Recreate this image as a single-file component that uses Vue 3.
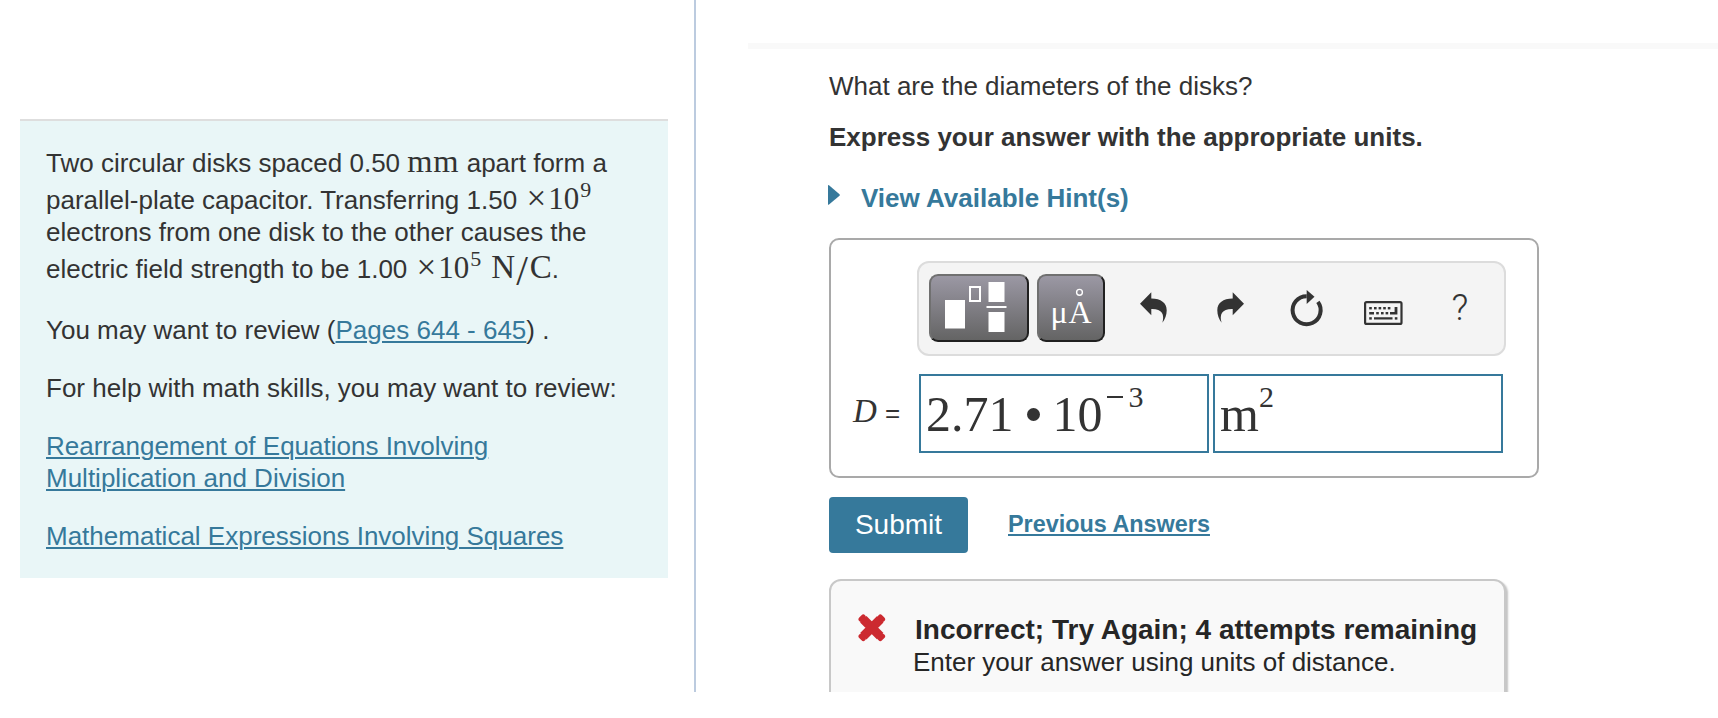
<script setup>
const keyDots = [
  [26.2, 33], [31, 33], [35.6, 33], [40.2, 33], [44.8, 33],
  [33.2, 38], [38, 38], [42.6, 38],
  [26.2, 43.2], [51.8, 43.2],
]
</script>

<template>
  <div class="page">
    <aside class="left">
      <div class="intro">
        <div class="problem">
          <div class="line tall">Two circular disks spaced 0.50 <span class="m mm">mm</span> apart form a</div>
          <div class="line">parallel-plate capacitor. Transferring 1.50 <span class="m times">×</span><span class="m ten">10</span><span class="m exp">9</span></div>
          <div class="line tall">electrons from one disk to the other causes the</div>
          <div class="line last">electric field strength to be 1.00 <span class="m times">×</span><span class="m ten">10</span><span class="m exp">5</span><span class="m unit">N<span class="slash">/</span>C</span>.</div>
        </div>
        <p>You may want to review (<a>Pages 644 - 645</a>) .</p>
        <p>For help with math skills, you may want to review:</p>
        <p><a>Rearrangement of Equations Involving<br>Multiplication and Division</a></p>
        <p><a>Mathematical Expressions Involving Squares</a></p>
      </div>
    </aside>

    <main class="right">
      <div class="rule"></div>
      <div class="content">
        <div class="question">What are the diameters of the disks?</div>
        <div class="express">Express your answer with the appropriate units.</div>
        <div class="hint">
          <svg width="13" height="22" viewBox="0 0 13 22"><path d="M0 1.500Q0 .500 1 1.200L11.500 10.200Q12.300 11 11.500 11.800L1 20.600Q0 21.300 0 20Z" fill="#36799b" /></svg>
          <span>View Available Hint(s)</span>
        </div>

        <section class="answer">
          <div class="toolbar">
            <div class="tbtn wide">
              <svg width="96" height="64" viewBox="0 0 96 64">
                <rect x="14" y="24" width="20" height="28.500" fill="#fff" />
                <rect x="39" y="11" width="10" height="14" fill="none" stroke="#fff" stroke-width="2" />
                <rect x="57.500" y="6" width="16" height="20" fill="#fff" />
                <rect x="55.500" y="30" width="20" height="2" fill="#fff" />
                <rect x="57.500" y="36" width="16" height="20" fill="#fff" />
              </svg>
            </div>
            <div class="tbtn units">
              <svg width="64" height="64" viewBox="0 0 64 64">
                <text x="11.500" y="46.800" class="mu">μ</text>
                <text x="29.500" y="46.800" class="mu">A</text>
                <circle cx="40.500" cy="16.300" r="2.900" fill="none" stroke="#fff" stroke-width="1.400" />
              </svg>
            </div>
            <div class="icons">
              <svg width="76" height="68" viewBox="0 0 76 68"><path d="M25 29.700 36.300 18.300V24.600C46 24.700 51.700 29 51.700 36.200 51.700 41 50 45 47.400 48.700 49.800 40.500 47 34.700 36.300 35V41.300Z" fill="#333" /></svg>
              <svg width="76" height="68" viewBox="0 0 76 68"><path d="M53 29.700 41.700 18.300V24.600C32 24.700 26.300 29 26.300 36.200 26.300 41 28 45 30.600 48.700 28.200 40.500 31 34.700 41.700 35V41.300Z" fill="#333" /></svg>
              <svg width="76" height="68" viewBox="0 0 76 68">
                <path d="M50.900 27.900A14 14 0 1 1 39.700 22.200" fill="none" stroke="#333" stroke-width="4" />
                <path d="M39.700 16 47.500 22.700 39.700 30Z" fill="#333" />
              </svg>
              <svg width="76" height="68" viewBox="0 0 76 68">
                <rect x="22.100" y="28.100" width="36.400" height="21.800" rx="1.500" fill="none" stroke="#333" stroke-width="2.200" />
                <rect v-for="(d, i) in keyDots" :key="i" :x="d[0]" :y="d[1]" width="2.600" height="2.400" fill="#333" />
                <path d="M26.200 38H31V40.400H26.200ZM31 43.200H49.500V45.600H31ZM51.600 33H54.400V40.400H47V38H51.600Z" fill="#333" />
              </svg>
              <svg width="76" height="68" viewBox="0 0 76 68"><text x="41" y="46.300" class="help">?</text></svg>
            </div>
          </div>
          <div class="entry">
            <div class="label"><i>D</i><span>=</span></div>
            <div class="field">
              <span class="num">2.71</span><span class="dot"></span><span class="num">10</span><span class="minus"></span><span class="sup">3</span>
            </div>
            <div class="field second"><span class="num">m</span><span class="sup">2</span></div>
          </div>
        </section>

        <div class="actions">
          <button>Submit</button>
          <a class="prev">Previous Answers</a>
        </div>

        <section class="feedback">
          <svg width="28" height="28" viewBox="0 0 28 28"><path d="M5.300 5.300 22.300 22.300M22.300 5.300 5.300 22.300" stroke="#cc2a30" stroke-width="9" /><path d="M5.300 3 3 5.300M22.300 3 24.600 5.300M3 22.300 5.300 24.600M24.600 22.300 22.300 24.600" stroke="#cc2a30" stroke-width="5" stroke-linecap="round" /></svg>
          <div>
            <div class="title">Incorrect; Try Again; 4 attempts remaining</div>
            <div class="detail">Enter your answer using units of distance.</div>
          </div>
        </section>
      </div>
    </main>
  </div>
</template>

<style>
body { background: #fff; }
</style>

<style scoped>
.page {
  display: flex;
  width: 1718px;
  height: 692px;
  overflow: hidden;
  font: 26px/32px "Liberation Sans", Arial, sans-serif;
  color: #333;
  white-space: nowrap;
}
.left {
  box-sizing: border-box;
  width: 696px;
  flex: none;
  border-right: 2px solid #bccbdf;
  padding: 119px 26px 0 20px;
}
.intro {
  box-sizing: border-box;
  height: 459px;
  border-top: 2px solid #dedede;
  background: #e9f6f7;
  padding: 26px 26px 0;
}
.line { height: 32px; }
.line.tall { height: 37px; }
.line.last { height: 35px; }
p { margin: 26px 0 0; }
a {
  color: #36799b;
  text-decoration: underline;
  text-decoration-thickness: 2px;
  text-underline-offset: 2px;
}
.m {
  font-family: "Liberation Serif", "Times New Roman", serif;
  font-size: 31px;
  line-height: 0;
}
.mm { font-size: 32.5px; letter-spacing: .8px; }
.times { font-size: 35px; position: relative; top: 1px; margin-left: 2px; }
.ten { margin-left: 2px; }
.exp { font-size: 22px; position: relative; top: -12px; margin-left: 1px; }
.unit { margin-left: 10px; font-size: 33px; }
.slash { font-size: 42px; position: relative; top: 7px; margin: 0 2px 0 1px; }

.right { flex: 1; }
.rule { height: 6px; margin: 43px 0 0 52px; background: #f9f9f9; }
.content { padding-left: 133px; }
.question { margin-top: 21px; }
.express { margin-top: 19px; font-weight: 700; }
.hint {
  display: flex;
  margin: 29px 0 0 -1px;
  color: #36799b;
  font-weight: 700;
}
.hint svg { margin: 2px 20px 0 0; }
.answer {
  box-sizing: border-box;
  width: 710px;
  height: 240px;
  margin-top: 24px;
  border: 2px solid #a9a9a9;
  border-radius: 10px;
  padding: 21px 0 0 22px;
}
.toolbar {
  box-sizing: border-box;
  display: flex;
  width: 589px;
  height: 95px;
  margin-left: 64px;
  border: 2px solid #dcdcdc;
  border-radius: 12px;
  padding: 11px 0 0 10px;
  background: #f4f4f4;
}
.tbtn {
  box-sizing: border-box;
  height: 68px;
  border: 2px solid;
  border-color: #707070 #202020 #202020 #707070;
  border-radius: 9px;
  background: linear-gradient(#9b98a4, #646464);
}
.tbtn svg, .icons svg { display: block; }
.wide { width: 100px; }
.units { width: 68px; margin-left: 8px; }
.mu { font: 32px "Liberation Serif", serif; fill: #fff; }
.icons { display: flex; margin-left: 10px; }
.help { font: 300 37px Roboto, sans-serif; fill: #333; text-anchor: middle; }
.entry { display: flex; margin-top: 18px; }
.label {
  display: flex;
  align-items: baseline;
  width: 66px;
  line-height: 79px;
}
.label i { font: italic 33px/75px "Liberation Serif", serif; width: 32px; }
.field {
  box-sizing: border-box;
  display: flex;
  width: 290px;
  height: 79px;
  border: 2px solid #36799b;
  padding-left: 5px;
  font-family: "Liberation Serif", "Times New Roman", serif;
}
.second { margin-left: 4px; }
.num { font-size: 50px; line-height: 76px; }
.dot {
  width: 13px;
  height: 13px;
  margin: 32px 13px 0 13px;
  border-radius: 50%;
  background: #333;
}
.minus { width: 16px; height: 2px; margin: 20px 6px 0 4px; background: #333; }
.sup { font-size: 30px; line-height: 42px; }
.actions { display: flex; margin-top: 19px; }
button {
  width: 139px;
  height: 56px;
  border: 0;
  border-radius: 4px;
  padding: 0;
  background: #36799b;
  color: #fff;
  font: 28px/56px "Liberation Sans", Arial, sans-serif;
}
.prev { margin-left: 40px; font-size: 23.4px; font-weight: 700; line-height: 54px; }
.feedback {
  box-sizing: border-box;
  display: flex;
  width: 677px;
  height: 150px;
  margin-top: 26px;
  border: 2px solid #c8c8c8;
  border-radius: 12px;
  box-shadow: 2px 2px 2px #c4c4c4;
  background: #f9f9f9;
  padding: 33px 0 0 27px;
  color: #262626;
}
.feedback > div { margin-left: 27px; }
.title { font-size: 28px; font-weight: 700; margin-left: 2px; }
</style>
